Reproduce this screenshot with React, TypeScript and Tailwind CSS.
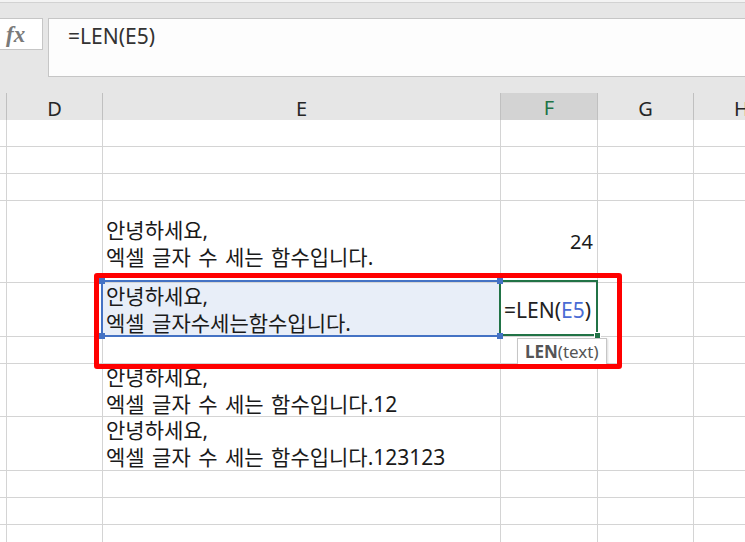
import React from "react";

const rowHeights = [27, 27, 27, 82, 54, 27, 53, 54, 27, 27, 27];

const cellFont = { fontFamily: '"Noto Sans", "Noto Sans CJK KR", sans-serif' };

function ECell({ row }: { row: number }) {
  const lines: Record<number, string[]> = {
    3: ["안녕하세요,", "엑셀 글자 수 세는 함수입니다."],
    4: ["안녕하세요,", "엑셀 글자수세는함수입니다."],
    6: ["안녕하세요,", "엑셀 글자 수 세는 함수입니다.12"],
    7: ["안녕하세요,", "엑셀 글자 수 세는 함수입니다.123123"],
  };
  const l = lines[row];
  const base = "border-r border-b border-[#d4d4d4] relative";
  if (!l) return <div className={`${base} bg-white`} />;
  const bg = row === 4 ? "bg-[#e8eef8]" : "bg-white";
  const just = row === 3 ? "justify-end pb-[11px]" : "justify-start";
  return (
    <div className={`${base} ${bg} flex flex-col ${just} pl-[3px]`}>
      {l.map((t, i) => (
        <div
          key={i}
          className="text-[21px] leading-[27px] text-[#1a1a1a] whitespace-nowrap [word-spacing:2px]"
          style={cellFont}
        >
          {t}
        </div>
      ))}
    </div>
  );
}

function FCell({ row }: { row: number }) {
  const base = "border-r border-b border-[#d4d4d4] bg-white flex items-center";
  if (row === 3)
    return (
      <div className={`${base} justify-end pr-[4px]`}>
        <span className="text-[20px] text-[#1a1a1a]" style={cellFont}>
          24
        </span>
      </div>
    );
  if (row === 4)
    return (
      <div className={`${base} pl-[3px]`}>
        <span className="text-[21px] leading-[28px] text-[#222]" style={cellFont}>
          =LEN(<span className="text-[#4a6cd4]">E5</span>)
        </span>
      </div>
    );
  return <div className={base} />;
}

export default function App() {
  return (
    <div
      className="relative w-[745px] h-[542px] overflow-hidden bg-white"
      style={{ fontFamily: '"Noto Sans", "Noto Sans CJK KR", sans-serif' }}
    >
      {/* top ribbon / formula bar */}
      <div className="h-[93px] bg-[#e6e6e6] flex flex-col">
        <div className="h-[2px] bg-[#f3f3f3]" />
        <div className="h-px bg-[#d2d2d2]" />
        <div className="mt-[15px] flex items-start">
          <div className="w-[43px] h-[32px] bg-white border border-l-0 border-[#c6c6c6] flex items-center pl-[6px]">
            <span
              className="italic font-bold text-[23px] text-[#7a7a7a] leading-none"
              style={{ fontFamily: '"Liberation Serif", serif' }}
            >
              fx
            </span>
          </div>
          <div className="ml-[5px] flex-1 h-[59px] bg-[#fdfdfd] border border-r-0 border-[#c6c6c6] pl-[19px] pt-[3px]">
            <span className="text-[21px] leading-[28px] text-[#333]">=LEN(E5)</span>
          </div>
        </div>
      </div>

      {/* column header */}
      <div className="grid grid-cols-[7px_96px_398px_97px_96px_96px] w-[790px] h-[27px] bg-[#e6e6e6]">
        <div className="border-r border-b border-r-[#c0c0c0] border-b-[#ababab]" />
        {["D", "E", "F", "G", "H"].map((c) => (
          <div
            key={c}
            className={
              c === "F"
                ? "bg-[#d3d3d3] border-r border-r-[#c0c0c0] border-b-2 border-b-[#217346] flex items-center justify-center text-[20px] text-[#217346]"
                : "border-r border-b border-r-[#c0c0c0] border-b-[#ababab] flex items-center justify-center text-[20px] text-[#262626]"
            }
          >
            {c}
          </div>
        ))}
      </div>

      {/* grid rows */}
      <div
        className="grid grid-cols-[7px_96px_398px_97px_96px_96px] w-[790px]"
        style={{ gridTemplateRows: rowHeights.map((h) => `${h}px`).join(" ") }}
      >
        {rowHeights.map((_, r) => (
          <React.Fragment key={r}>
            <div className="border-r border-b border-[#d4d4d4] bg-white" />
            <div className="border-r border-b border-[#d4d4d4] bg-white" />
            <ECell row={r} />
            <FCell row={r} />
            <div className="border-r border-b border-[#d4d4d4] bg-white" />
            <div className="border-r border-b border-[#d4d4d4] bg-white" />
          </React.Fragment>
        ))}
      </div>

      {/* E5 selection (reference range) */}
      <div className="absolute left-[101px] top-[280px] w-[399px] h-[57px] border-2 border-r-0 border-[#4472c4]" />
      {/* F5 active cell */}
      <div className="absolute left-[499px] top-[280px] w-[99px] h-[56px] border-2 border-[#217346]" />
      {/* handles */}
      <div className="absolute left-[99px] top-[278px] w-[6px] h-[6px] bg-[#4472c4]" />
      <div className="absolute left-[99px] top-[333px] w-[6px] h-[6px] bg-[#4472c4]" />
      <div className="absolute left-[497px] top-[278px] w-[6px] h-[6px] bg-[#4472c4]" />
      <div className="absolute left-[497px] top-[333px] w-[6px] h-[6px] bg-[#4472c4]" />
      <div className="absolute left-[594px] top-[332px] w-[7px] h-[7px] bg-[#217346] border border-white" />

      {/* tooltip */}
      <div className="absolute left-[517px] top-[338px] w-[90px] h-[27px] bg-white border border-[#c6c6c6] shadow-[1px_1px_2px_rgba(0,0,0,0.15)] flex items-center pl-[7px]">
        <span className="text-[17px] leading-none text-[#555]">
          <span className="font-bold">LEN</span>(text)
        </span>
      </div>

      {/* red highlight box */}
      <div className="absolute left-[94px] top-[273px] w-[528px] h-[96px] border-[5px] border-[#ff0000] rounded-[3px]" />
    </div>
  );
}
